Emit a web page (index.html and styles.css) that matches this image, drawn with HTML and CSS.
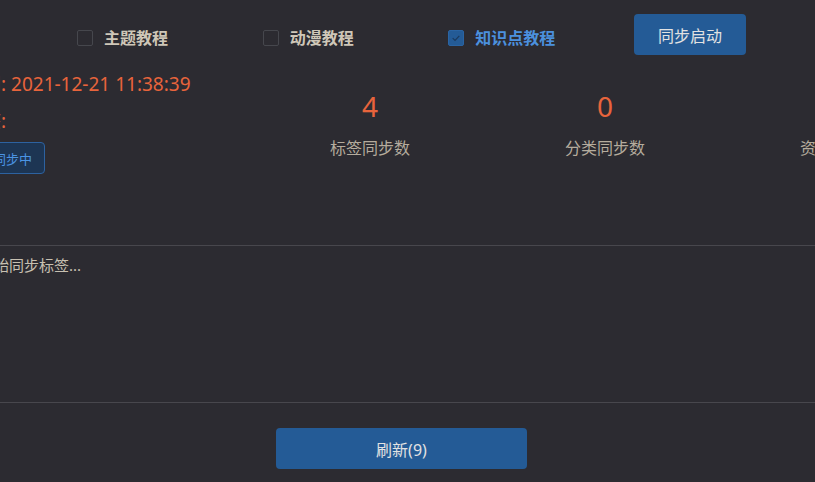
FILE: index.html
```html
<!DOCTYPE html>
<html lang="zh-CN">
<head>
<meta charset="utf-8">
<title>同步</title>
<link rel="stylesheet" href="styles.css">
</head>
<body>
<div class="page">
  <header class="toolbar">
    <label class="opt"><span class="box"></span><span class="opt-text">主题教程</span></label>
    <label class="opt"><span class="box"></span><span class="opt-text">动漫教程</span></label>
    <label class="opt opt-checked"><span class="box"><svg viewBox="0 0 16 16" width="16" height="16"><path d="M4.2 8.2 L6.9 10.8 L11.8 5.6" fill="none" stroke="#1b3a5e" stroke-width="1.4"/></svg></span><span class="opt-text">知识点教程</span></label>
    <button class="btn btn-start">同步启动</button>
  </header>

  <section class="info">
    <div class="meta">
      <div class="meta-line">同步时间: 2021-12-21 11:38:39</div>
      <div class="meta-line meta-gap">同步状态:</div>
      <div class="meta-actions"><button class="btn-state">同步中</button></div>
    </div>
    <div class="stat"><div class="stat-num">4</div><div class="stat-label">标签同步数</div></div>
    <div class="stat"><div class="stat-num">0</div><div class="stat-label">分类同步数</div></div>
    <div class="stat"><div class="stat-num">0</div><div class="stat-label">资源同步数</div></div>
  </section>

  <section class="log">
    <p class="log-line">开始同步标签...</p>
  </section>

  <footer class="footer">
    <button class="btn btn-refresh">刷新(9)</button>
  </footer>
</div>
</body>
</html>
```

FILE: styles.css
```css
html, body {
  background: #2c2b31;
}
body {
  margin: 0;
  overflow: hidden;
  font-family: "Noto Sans", "Noto Sans CJK SC", sans-serif;
}
.page {
  width: 1083px;
  margin-left: -140px;
}

/* toolbar */
.toolbar {
  box-sizing: border-box;
  height: 71px;
  padding: 14px 0 0 217px;
  display: flex;
  align-items: flex-start;
}
.opt {
  width: 185.67px;
  height: 16px;
  margin-top: 16px;
  display: flex;
  align-items: center;
  gap: 11px;
  flex-shrink: 0;
}
.box {
  box-sizing: border-box;
  width: 16px;
  height: 16px;
  border: 1px solid #46474d;
  border-radius: 2px;
  display: flex;
  align-items: center;
  justify-content: center;
  flex-shrink: 0;
}
.box svg {
  display: block;
}
.opt-text {
  font-size: 16px;
  line-height: 16px;
  font-weight: bold;
  color: #cfc7b8;
  white-space: nowrap;
}
.opt-checked .box {
  background: #245b96;
  border-color: #2a64a3;
}
.opt-checked .opt-text {
  color: #4b90de;
}

.btn {
  border: 0;
  border-radius: 4px;
  background: #245b96;
  color: #e2e2e2;
  font-family: "Noto Sans", "Noto Sans CJK SC", sans-serif;
  font-size: 16px;
  padding: 0;
}
.btn-start {
  width: 112px;
  height: 41px;
  flex-shrink: 0;
}

/* info */
.info {
  display: grid;
  grid-template-columns: 327.5px repeat(3, 235px);
  padding: 0 0 71px 65px;
}
.meta-line {
  font-size: 19px;
  line-height: 26px;
  color: #e8643c;
  white-space: nowrap;
}
.meta-gap {
  margin-top: 11px;
}
.meta-actions {
  margin-top: 8px;
  display: flex;
}
.btn-state {
  height: 32px;
  margin-left: 55px;
  padding: 0 12px;
  border: 1px solid #2d62a0;
  border-radius: 4px;
  background: #1d3553;
  color: #4b94e3;
  font-family: "Noto Sans", "Noto Sans CJK SC", sans-serif;
  font-size: 13px;
}
.stat {
  padding-top: 17px;
  text-align: center;
}
.stat-num {
  font-size: 28px;
  line-height: 36px;
  color: #e8643c;
}
.stat-label {
  margin-top: 13px;
  font-size: 16px;
  line-height: 22px;
  color: #b5ac9d;
  white-space: nowrap;
}

/* log */
.log {
  box-sizing: border-box;
  height: 158px;
  border-top: 1px solid #48474d;
  border-bottom: 1px solid #48474d;
  padding: 9px 0 0 119px;
}
.log-line {
  margin: 0;
  font-size: 15px;
  line-height: 20px;
  color: #c8c0b1;
}

/* footer */
.footer {
  padding-top: 25px;
  display: flex;
  justify-content: center;
}
.btn-refresh {
  width: 251px;
  height: 41px;
}
```
